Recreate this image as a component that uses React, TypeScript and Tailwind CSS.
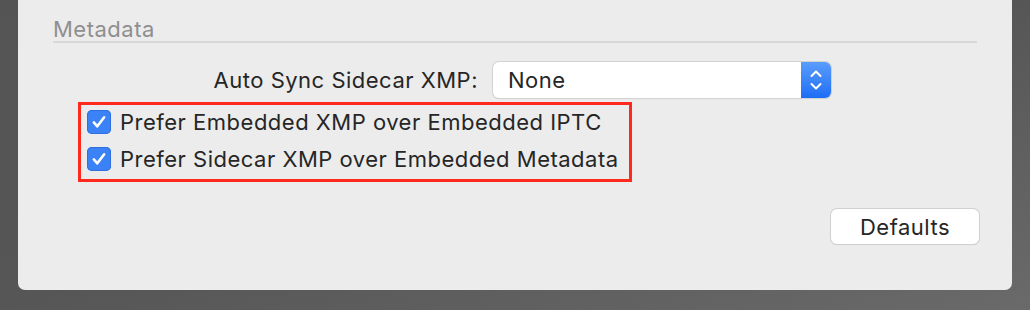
import React, { useState } from 'react';

const font = { fontFamily: 'Inter, "Liberation Sans", sans-serif' };

const Check: React.FC<{ checked: boolean; onClick: () => void }> = ({ checked, onClick }) => (
  <button
    onClick={onClick}
    className={`w-[24px] h-[24px] rounded-[5px] flex items-center justify-center shrink-0 ${
      checked ? 'bg-[#3b82f7] shadow-[inset_0_0_0_1px_#2f6fe0]' : 'bg-white shadow-[0_0_0_1px_#c4c4c4]'
    }`}
  >
    {checked && (
      <svg width="18" height="18" viewBox="0 0 16 16" fill="none">
        <path d="M3.4 8.4 L6.5 11.8 L12.6 3.8" stroke="white" strokeWidth="2.3" strokeLinecap="round" strokeLinejoin="round" />
      </svg>
    )}
  </button>
);

export default function App() {
  const [embedded, setEmbedded] = useState(true);
  const [sidecar, setSidecar] = useState(true);

  return (
    <div className="w-[1030px] h-[310px] bg-gradient-to-br from-[#545454] via-[#565656] to-[#6a6a6a] text-[#262626] text-[22px] leading-[26px] tracking-[0.5px]" style={font}>
      <div className="ml-[18px] w-[994px] h-[290px] bg-[#ececec] rounded-b-[7px] pl-[35px] pr-[35px] pt-[18px] flex flex-col">
        <div className="text-[#8f8f8f] leading-[23px]">Metadata</div>
        <div className="h-[2px] bg-[#d8d8d8]" />

        <div className="flex items-center mt-[19px]">
          <div className="w-[425px] text-right">Auto Sync Sidecar XMP:</div>
          <div className="ml-[15px] w-[338px] h-[36px] bg-white rounded-[6px] shadow-[0_0_0_1px_#d2d2d2,0_1px_1px_rgba(0,0,0,0.12)] flex items-center overflow-hidden">
            <span className="flex-1 pl-[15px]">None</span>
            <div className="w-[30px] h-full bg-gradient-to-b from-[#5a9cfc] to-[#1c6ef5] flex items-center justify-center">
              <svg width="14" height="26" viewBox="0 0 14 26" fill="none">
                <path d="M2.5 9 L7 4.5 L11.5 9" stroke="white" strokeWidth="2" strokeLinecap="round" strokeLinejoin="round" />
                <path d="M2.5 17 L7 21.5 L11.5 17" stroke="white" strokeWidth="2" strokeLinecap="round" strokeLinejoin="round" />
              </svg>
            </div>
          </div>
        </div>

        <div className="ml-[25px] mt-[4px] w-[554px] h-[80px] border-[3px] border-[#fd2a1d] pl-[6px] pt-[4px] flex flex-col gap-[11px]">
          <label className="flex items-center gap-[9px]">
            <Check checked={embedded} onClick={() => setEmbedded(!embedded)} />
            <span>Prefer Embedded XMP over Embedded IPTC</span>
          </label>
          <label className="flex items-center gap-[9px]">
            <Check checked={sidecar} onClick={() => setSidecar(!sidecar)} />
            <span>Prefer Sidecar XMP over Embedded Metadata</span>
          </label>
        </div>

        <div className="flex justify-end mt-[27px] -mr-[2px]">
          <button className="w-[148px] h-[35px] bg-white rounded-[6px] shadow-[0_0_0_1px_#d0d0d0,0_1px_1px_rgba(0,0,0,0.15)]">
            Defaults
          </button>
        </div>
      </div>
    </div>
  );
}
